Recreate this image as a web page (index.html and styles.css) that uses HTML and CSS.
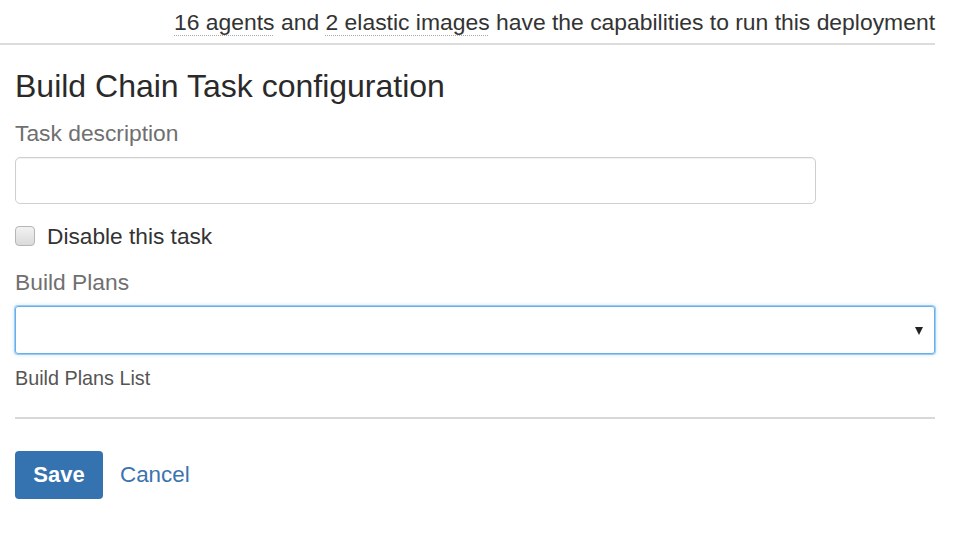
FILE: index.html
```html
<!DOCTYPE html>
<html>
<head>
<meta charset="utf-8">
<link rel="stylesheet" href="styles.css">
</head>
<body>
<div class="page">
  <div class="caps">
    <span class="dotted">16 agents</span> and <span class="dotted">2 elastic images</span> have the capabilities to run this deployment
  </div>
  <form class="form">
    <h3 class="title">Build Chain Task configuration</h3>
    <label class="field-label">Task description</label>
    <input class="text-input" type="text">
    <div class="check-row">
      <input class="check" type="checkbox">
      <span class="check-label">Disable this task</span>
    </div>
    <label class="field-label second">Build Plans</label>
    <div class="select">
      <span class="arrow"></span>
    </div>
    <div class="hint">Build Plans List</div>
    <div class="divider"></div>
    <div class="buttons">
      <button class="save" type="button">Save</button>
      <a class="cancel" href="#">Cancel</a>
    </div>
  </form>
</div>
</body>
</html>
```

FILE: styles.css
```css
html, body {
  margin: 0;
  padding: 0;
  background: #fff;
}
body {
  font-family: "Liberation Sans", Arial, sans-serif;
  color: #333;
  font-size: 22.4px;
}
.page {
  padding-right: 19px;
}
.caps {
  padding: 7px 0 6px 0;
  line-height: 30px;
  font-size: 22.9px;
  text-align: right;
  border-bottom: 2px solid #dcdcdc;
  color: #333;
}
.dotted {
  text-decoration: underline dotted #aaa;
  text-decoration-thickness: 1px;
  text-underline-offset: 5px;
}
.form {
  padding-left: 15px;
  display: flex;
  flex-direction: column;
  align-items: flex-start;
}
.title {
  margin: 21px 0 0 0;
  font-size: 32px;
  line-height: 40px;
  font-weight: normal;
  color: #2a2a2a;
}
.field-label {
  margin-top: 12px;
  line-height: 30px;
  font-size: 22.8px;
  color: #707070;
}
.field-label.second {
  margin-top: 16px;
}
.text-input {
  margin: 9px 0 0 0;
  box-sizing: border-box;
  width: 801px;
  height: 47px;
  border: 1px solid #cfcfcf;
  border-radius: 5px;
  box-shadow: inset 0 1px 1px rgba(0,0,0,0.06);
  font-family: inherit;
  font-size: 22.4px;
}
.check-row {
  margin-top: 17px;
  display: flex;
  align-items: center;
  height: 30px;
}
.check {
  appearance: none;
  -webkit-appearance: none;
  margin: 0;
  width: 20px;
  height: 20px;
  box-sizing: border-box;
  border: 1px solid #b5b5b5;
  border-radius: 4px;
  background: linear-gradient(#f2f2f2, #dadada);
}
.check-label {
  margin-left: 12px;
  line-height: 30px;
  font-size: 22.7px;
  color: #333;
}
.select {
  margin-top: 9px;
  box-sizing: border-box;
  width: 100%;
  height: 48px;
  border: 1px solid #66afe9;
  border-radius: 3px;
  box-shadow: 0 0 0 1px rgba(102,175,233,0.55), 0 0 4px rgba(102,175,233,0.5);
  display: flex;
  align-items: center;
  justify-content: flex-end;
  padding-right: 11px;
}
.arrow {
  width: 0;
  height: 0;
  border-left: 4.5px solid transparent;
  border-right: 4.5px solid transparent;
  border-top: 8px solid #222;
  margin-top: 2px;
}
.hint {
  margin-top: 11px;
  font-size: 19.8px;
  line-height: 26px;
  color: #555;
}
.divider {
  margin-top: 26px;
  width: 100%;
  height: 2px;
  background: #d8d8d8;
}
.buttons {
  margin-top: 32px;
  display: flex;
  align-items: center;
}
.save {
  width: 88px;
  height: 48px;
  border: none;
  border-radius: 4px;
  background: #3572b0;
  color: #fff;
  font-family: inherit;
  font-weight: bold;
  font-size: 22px;
  padding: 0;
}
.cancel {
  margin-left: 17px;
  color: #3b73af;
  text-decoration: none;
  font-size: 22.4px;
}
```
